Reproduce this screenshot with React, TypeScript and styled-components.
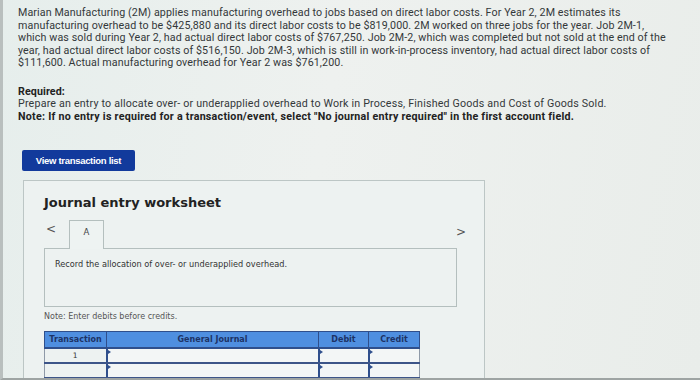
import styled, { createGlobalStyle } from "styled-components";

const GlobalStyle = createGlobalStyle`
    html, body {
        margin: 0;
        padding: 0;
        background: #e9efed;
    }
    * {
        box-sizing: border-box;
    }
`;

const Page = styled.div`
    width: 700px;
    height: 380px;
    overflow: hidden;
    padding: 7px 0 0 15px;
    border-left: 3px solid #b9bfbe;
    border-bottom: 2px solid #9ea4a3;
    background: linear-gradient(100deg, #e6eeec 0%, #eef1ef 45%, #e9edea 100%);
    font-family: Roboto, "Liberation Sans", sans-serif;
    color: #34383a;
`;

const Problem = styled.div`
    font-size: 10.7px;
    line-height: 12.5px;
`;

const Line = styled.div<{ $bold?: boolean; $tight?: number }>`
    white-space: nowrap;
    letter-spacing: ${(p) => p.$tight ?? 0.1}px;
    font-weight: ${(p) => (p.$bold ? 700 : 400)};
    color: ${(p) => (p.$bold ? "#222" : "inherit")};
`;

const Required = styled.div`
    margin-top: 16px;
    font-size: 10.7px;
    line-height: 12.5px;
`;

const ViewButton = styled.button`
    display: block;
    margin: 27px 0 0 4px;
    width: 113px;
    height: 21px;
    padding: 0;
    border: none;
    border-radius: 2px;
    background: #123a9c;
    color: #fff;
    font-family: "Liberation Sans", Arial, sans-serif;
    font-weight: 700;
    font-size: 9.5px;
    letter-spacing: -0.3px;
`;

const Worksheet = styled.section`
    margin: 9px 0 0 5px;
    width: 462px;
    height: 220px;
    padding: 14px 0 0 20px;
    border: 1px solid #bcc6c5;
    border-bottom: none;
    background: #edf2f1;
    font-family: "DejaVu Sans", Verdana, sans-serif;
`;

const Title = styled.h2`
    margin: 0;
    font-size: 13px;
    font-weight: 700;
    color: #222;
`;

const TabRow = styled.div`
    display: flex;
    align-items: flex-end;
    width: 413px;
    margin-top: 10px;
    height: 28px;
`;

const Arrow = styled.span`
    width: 25px;
    align-self: flex-start;
    padding: 2px 0 0 2px;
    font-size: 12px;
    color: #555;
`;

const Tab = styled.div`
    width: 35px;
    height: 29px;
    margin-bottom: -1px;
    padding-top: 6px;
    text-align: center;
    font-size: 8.5px;
    color: #444;
    border: 1px solid #b4bfbe;
    border-bottom: none;
    background: #eef3f2;
    position: relative;
    z-index: 1;
`;

const Spacer = styled.div`
    flex: 1;
`;

const NextArrow = styled(Arrow)`
    width: auto;
    padding: 5px 0 0 0;
    margin-right: -9px;
`;

const Prompt = styled.div`
    width: 413px;
    height: 59px;
    padding: 10px 0 0 10px;
    border: 1px solid #b4bfbe;
    font-size: 8.2px;
    color: #333;
`;

const Hint = styled.div`
    margin-top: 5px;
    font-size: 8px;
    color: #555;
`;

const Table = styled.table`
    margin-top: 10px;
    border-collapse: collapse;
    width: 376px;
    font-family: "DejaVu Sans", Verdana, sans-serif;
`;

const Th = styled.th<{ $w: number }>`
    width: ${(p) => p.$w}px;
    height: 16px;
    padding: 0;
    background: #4f8fe0;
    color: #1d3366;
    font-size: 8px;
    font-weight: 700;
    border: 1px solid #2f4f8c;
    border-bottom: 2px solid #2f4f8c;
`;

const Td = styled.td<{ $input?: boolean }>`
    height: 15px;
    padding: 0;
    font-size: 7.5px;
    text-align: center;
    color: #333;
    background: ${(p) => (p.$input ? "rgba(255,255,255,0.35)" : "transparent")};
    border: 1px solid #8f9aa8;
    border-left: ${(p) => (p.$input ? "2px solid #2f4f8c" : "1px solid #8f9aa8")};
    border-bottom: 2px solid #3d5588;
    position: relative;
`;

const Caret = styled.span`
    position: absolute;
    left: 0;
    top: 1px;
    width: 0;
    height: 0;
    border-top: 2px solid transparent;
    border-bottom: 2px solid transparent;
    border-left: 3px solid #2f4f8c;
`;

const problemLines = [
    "Marian Manufacturing (2M) applies manufacturing overhead to jobs based on direct labor costs. For Year 2, 2M estimates its",
    "manufacturing overhead to be $425,880 and its direct labor costs to be $819,000. 2M worked on three jobs for the year. Job 2M-1,",
    "which was sold during Year 2, had actual direct labor costs of $767,250. Job 2M-2, which was completed but not sold at the end of the",
    "year, had actual direct labor costs of $516,150. Job 2M-3, which is still in work-in-process inventory, had actual direct labor costs of",
    "$111,600. Actual manufacturing overhead for Year 2 was $761,200.",
];

const rows = ["1", ""];

function App() {
    return (
        <Page>
            <GlobalStyle />
            <Problem>
                {problemLines.map((l) => (
                    <Line key={l}>{l}</Line>
                ))}
            </Problem>
            <Required>
                <Line $bold>Required:</Line>
                <Line $tight={0.18}>Prepare an entry to allocate over- or underapplied overhead to Work in Process, Finished Goods and Cost of Goods Sold.</Line>
                <Line $bold $tight={0.25}>
                    Note: If no entry is required for a transaction/event, select "No journal entry required" in the first account field.
                </Line>
            </Required>
            <ViewButton>View transaction list</ViewButton>
            <Worksheet>
                <Title>Journal entry worksheet</Title>
                <TabRow>
                    <Arrow>&lt;</Arrow>
                    <Tab>A</Tab>
                    <Spacer />
                    <NextArrow>&gt;</NextArrow>
                </TabRow>
                <Prompt>Record the allocation of over- or underapplied overhead.</Prompt>
                <Hint>Note: Enter debits before credits.</Hint>
                <Table>
                    <thead>
                        <tr>
                            <Th $w={62}>Transaction</Th>
                            <Th $w={212}>General Journal</Th>
                            <Th $w={50}>Debit</Th>
                            <Th $w={51}>Credit</Th>
                        </tr>
                    </thead>
                    <tbody>
                        {rows.map((r, i) => (
                            <tr key={i}>
                                <Td>{r}</Td>
                                <Td $input><Caret /></Td>
                                <Td $input><Caret /></Td>
                                <Td $input><Caret /></Td>
                            </tr>
                        ))}
                    </tbody>
                </Table>
            </Worksheet>
        </Page>
    );
}

export default App;
